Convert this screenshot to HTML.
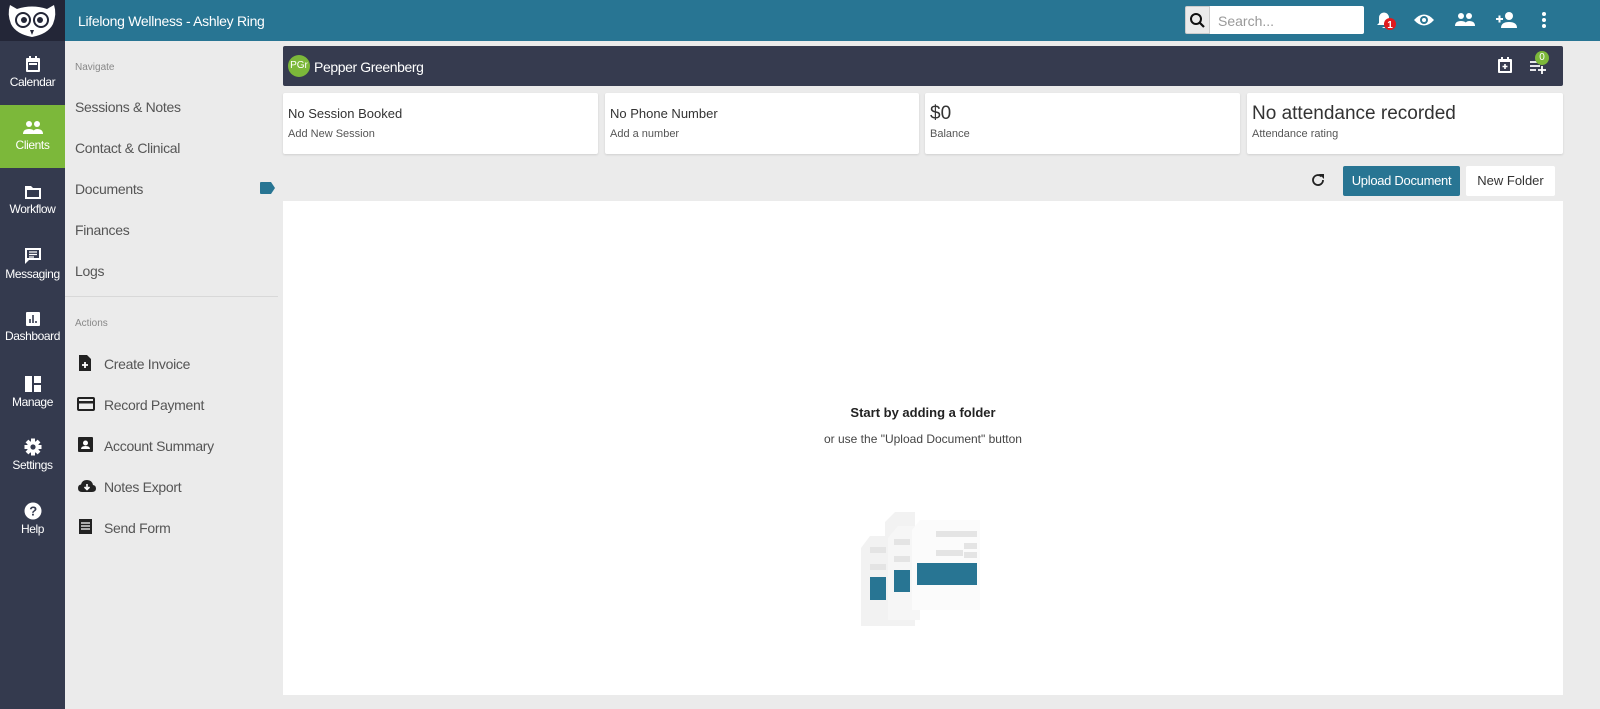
<!DOCTYPE html>
<html><head><meta charset="utf-8"><style>
*{box-sizing:border-box;margin:0;padding:0}
body{width:1600px;height:709px;overflow:hidden;background:#ebebeb;font-family:"Liberation Sans",sans-serif;position:relative}
.top{position:absolute;left:0;top:0;width:1600px;height:41px;background:#287593}
.logo{position:absolute;left:0;top:0;width:65px;height:41px;background:#232637}
.side{position:absolute;left:0;top:41px;width:65px;height:668px;background:#343a4e}
.si{position:absolute;left:0;width:65px;text-align:center;color:#fff;font-size:12px;letter-spacing:-.4px}
.si svg{display:block;margin:0 auto 2px}
.nav{position:absolute;left:65px;top:41px;width:215px;height:668px;background:#ebebeb}
.nl{position:absolute;left:10px;font-size:14px;color:#555;letter-spacing:-.3px}
.hd{position:absolute;left:10px;font-size:10px;color:#888}
.ai{position:absolute;left:12px;font-size:14px;color:#555;letter-spacing:-.3px}
.ai svg{position:absolute;left:0;top:-2px}
.ai span{position:absolute;left:27px;white-space:nowrap}
.card{position:absolute;top:93px;height:61px;background:#fff;border-radius:2px;box-shadow:0 1px 2px rgba(0,0,0,.12)}
.card .a{position:absolute;left:5px;top:13px;font-size:13px;color:#333}
.card .b{position:absolute;left:5px;top:35px;font-size:11px;color:#555}
</style></head><body>
<div class="top">
<div class="logo"><svg width="65" height="41" viewBox="0 0 65 41"><path d="M10 5 L17 9 Q32 4 47 9 L54 5 Q57 14 53 24 Q48 34 32 37 Q16 34 11 24 Q7 14 10 5Z" fill="#fff"/><circle cx="23" cy="20" r="8" fill="#232637"/><circle cx="41" cy="20" r="8" fill="#232637"/><circle cx="23" cy="20" r="6" fill="#fff"/><circle cx="41" cy="20" r="6" fill="#fff"/><circle cx="24" cy="20" r="3" fill="#232637"/><circle cx="40" cy="20" r="3" fill="#232637"/><path d="M30 30 L32 35 L34 30Z" fill="#232637"/></svg></div>
<div style="position:absolute;left:78px;top:13px;color:#fff;font-size:14px;letter-spacing:-.3px">Lifelong Wellness - Ashley Ring</div>
<div style="position:absolute;left:1185px;top:6px;width:25px;height:28px;background:#ebebeb;border:1px solid #ccc;border-radius:2px 0 0 2px"><svg width="23" height="26" viewBox="0 0 23 26"><circle cx="10" cy="12" r="5" fill="none" stroke="#111" stroke-width="2"/><path d="M14 16l4 4" stroke="#111" stroke-width="2.2"/></svg></div>
<div style="position:absolute;left:1210px;top:6px;width:154px;height:28px;background:#fff;border-radius:0 2px 2px 0;color:#999;font-size:14px;padding:7px 8px">Search...</div>
<svg style="position:absolute;left:1374px;top:10px" width="26" height="22" viewBox="0 0 26 22"><path d="M3 15 L5 13 V8 Q5 3 10 2.5 Q15 3 15 8 V13 L17 15Z M8 17 Q10 19 12 17Z" fill="#fff"/><circle cx="16" cy="14" r="6" fill="#e0191d"/><text x="16" y="18" font-size="10" font-weight="bold" fill="#fff" text-anchor="middle" font-family="Liberation Sans">1</text></svg>
<svg style="position:absolute;left:1413px;top:12px" width="22" height="16" viewBox="0 0 22 16"><path d="M1 8 Q11 -3 21 8 Q11 19 1 8Z" fill="#fff"/><circle cx="11" cy="8" r="4" fill="#287593"/><circle cx="11" cy="8" r="2" fill="#fff"/></svg>
<svg style="position:absolute;left:1454px;top:12px" width="22" height="16" viewBox="0 0 22 16"><circle cx="7" cy="4" r="3" fill="#fff"/><circle cx="15" cy="4" r="3" fill="#fff"/><path d="M1 14 Q1 9 7 9 Q13 9 13 14Z M11 14 Q11 9 15 9 Q21 9 21 14Z" fill="#fff"/></svg>
<svg style="position:absolute;left:1494px;top:11px" width="24" height="18" viewBox="0 0 24 18"><path d="M2 8h7M5.5 4.5v7" stroke="#fff" stroke-width="2"/><circle cx="15" cy="5" r="4" fill="#fff"/><path d="M7 17 Q7 11 15 11 Q23 11 23 17Z" fill="#fff"/></svg>
<svg style="position:absolute;left:1540px;top:11px" width="8" height="20"><circle cx="4" cy="3" r="2" fill="#fff"/><circle cx="4" cy="9" r="2" fill="#fff"/><circle cx="4" cy="15" r="2" fill="#fff"/></svg>
</div>
<div class="side">
<div class="si" style="top:14px"><svg width="16" height="18" viewBox="0 0 16 18"><rect x="1" y="3" width="14" height="14" rx="1" fill="#fff"/><rect x="3" y="7" width="10" height="8" fill="#343a4e"/><rect x="4" y="1" width="2" height="3" fill="#fff"/><rect x="10" y="1" width="2" height="3" fill="#fff"/><rect x="4" y="8" width="8" height="2" fill="#fff"/></svg>Calendar</div>
<div class="si" style="top:64px;height:63px;background:#7cb83a;padding-top:15px"><svg width="22" height="16" viewBox="0 0 22 16"><circle cx="7" cy="4" r="3" fill="#fff"/><circle cx="15" cy="4" r="3" fill="#fff"/><path d="M1 14 Q1 9 7 9 Q13 9 13 14Z M11 14 Q11 9 15 9 Q21 9 21 14Z" fill="#fff"/></svg>Clients</div>
<div class="si" style="top:143px"><svg width="18" height="16" viewBox="0 0 18 16"><path d="M1 2h6l2 2h8v11H1Z" fill="#fff"/><rect x="3" y="6" width="12" height="7" fill="#343a4e"/></svg>Workflow</div>
<div class="si" style="top:206px"><svg width="18" height="18" viewBox="0 0 18 18"><path d="M1 1h16v12H5l-4 4Z" fill="#fff"/><rect x="3" y="3" width="12" height="8" fill="#343a4e"/><path d="M5 5h8M5 7.5h8M5 10h5" stroke="#fff" stroke-width="1.2"/></svg>Messaging</div>
<div class="si" style="top:270px"><svg width="16" height="16" viewBox="0 0 16 16"><rect x="1" y="1" width="14" height="14" rx="1" fill="#fff"/><path d="M5 12V8M8 12V4M11 12v-2" stroke="#343a4e" stroke-width="1.6"/></svg>Dashboard</div>
<div class="si" style="top:334px"><svg width="18" height="18" viewBox="0 0 18 18"><rect x="1" y="1" width="7" height="16" fill="#fff"/><rect x="10" y="1" width="7" height="7" fill="#fff"/><rect x="10" y="10" width="7" height="7" fill="#fff"/></svg>Manage</div>
<div class="si" style="top:397px"><svg width="18" height="18" viewBox="0 0 18 18"><g fill="#fff"><circle cx="9" cy="9" r="6"/><rect x="7" y="0.5" width="4" height="17"/><rect x="0.5" y="7" width="17" height="4"/><rect x="7" y="0.5" width="4" height="17" transform="rotate(45 9 9)"/><rect x="7" y="0.5" width="4" height="17" transform="rotate(-45 9 9)"/></g><circle cx="9" cy="9" r="2.6" fill="#343a4e"/></svg>Settings</div>
<div class="si" style="top:461px"><svg width="18" height="18" viewBox="0 0 18 18"><circle cx="9" cy="9" r="8.5" fill="#fff"/><text x="9" y="13.5" font-size="13" font-weight="bold" fill="#343a4e" text-anchor="middle" font-family="Liberation Sans">?</text></svg>Help</div>
</div>
<div class="nav">
<div class="hd" style="top:21px">Navigate</div>
<div class="nl" style="top:58px">Sessions &amp; Notes</div>
<div class="nl" style="top:99px">Contact &amp; Clinical</div>
<div class="nl" style="top:140px">Documents</div>
<svg style="position:absolute;left:195px;top:141px" width="16" height="12"><path d="M0 1Q0 0 1 0H11L15 6L11 12H1Q0 12 0 11Z" fill="#287593"/></svg>
<div class="nl" style="top:181px">Finances</div>
<div class="nl" style="top:222px">Logs</div>
<div style="position:absolute;left:0;top:255px;width:213px;height:1px;background:#d8d8d8"></div>
<div class="hd" style="top:277px">Actions</div>
<div class="ai" style="top:315px"><svg width="16" height="18" viewBox="0 0 16 18"><path d="M2 1h8l4 4v12H2Z" fill="#222"/><path d="M8 8v6M5 11h6" stroke="#fff" stroke-width="1.8"/></svg><span>Create Invoice</span></div>
<div class="ai" style="top:356px"><svg width="18" height="18" viewBox="0 0 18 18"><rect x="1" y="3" width="16" height="12" rx="1" fill="none" stroke="#222" stroke-width="2"/><rect x="1" y="6" width="16" height="2.5" fill="#222"/></svg><span>Record Payment</span></div>
<div class="ai" style="top:397px"><svg width="18" height="18" viewBox="0 0 18 18"><rect x="1" y="1" width="15" height="15" rx="1" fill="#222"/><circle cx="8.5" cy="7" r="2.5" fill="#fff"/><path d="M4 13Q4 10 8.5 10Q13 10 13 13Z" fill="#fff"/></svg><span>Account Summary</span></div>
<div class="ai" style="top:438px"><svg width="20" height="18" viewBox="0 0 20 18"><path d="M5 15Q1 15 1 11Q1 8 4 7.5Q5 3 10 3Q15 3 16 8Q19 8.5 19 11.5Q19 15 15 15Z" fill="#222"/><path d="M10 7v5M7.5 10l2.5 2.5L12.5 10" stroke="#fff" stroke-width="1.6" fill="none"/></svg><span>Notes Export</span></div>
<div class="ai" style="top:479px"><svg width="18" height="18" viewBox="0 0 18 18"><rect x="2" y="1" width="13" height="15" fill="#222"/><path d="M4 5h9M4 8h9M4 11h9" stroke="#fff" stroke-width="1.3"/></svg><span>Send Form</span></div>
</div>
<div style="position:absolute;left:283px;top:46px;width:1280px;height:40px;background:#363b4f;border-radius:2px">
<div style="position:absolute;left:5px;top:9px;width:22px;height:22px;border-radius:50%;background:#7cb83a;color:#fff;font-size:10px;line-height:22px;text-align:center">PGr</div>
<div style="position:absolute;left:31px;top:13px;color:#fff;font-size:14px;letter-spacing:-.4px">Pepper Greenberg</div>
<svg style="position:absolute;left:1214px;top:10px" width="16" height="18" viewBox="0 0 16 18"><rect x="1" y="3" width="14" height="14" rx="1" fill="#fff"/><rect x="3" y="6" width="10" height="9" fill="#363b4f"/><rect x="4" y="1" width="2" height="3" fill="#fff"/><rect x="10" y="1" width="2" height="3" fill="#fff"/><path d="M8 8v5M5.5 10.5h5" stroke="#fff" stroke-width="1.6"/></svg>
<svg style="position:absolute;left:1246px;top:14px" width="18" height="14" viewBox="0 0 18 14"><path d="M1 2h10M1 6h10M1 10h6M13 6v8M9 10h8" stroke="#fff" stroke-width="1.8"/></svg>
<div style="position:absolute;left:1252px;top:5px;width:14px;height:14px;border-radius:50%;background:#7cb83a;color:#fff;font-size:10px;line-height:14px;text-align:center">0</div>
</div>
<div class="card" style="left:283px;width:315px"><div class="a">No Session Booked</div><div class="b">Add New Session</div></div>
<div class="card" style="left:605px;width:314px"><div class="a">No Phone Number</div><div class="b">Add a number</div></div>
<div class="card" style="left:925px;width:315px"><div class="a" style="font-size:19px;top:10px">$0</div><div class="b">Balance</div></div>
<div class="card" style="left:1247px;width:316px"><div class="a" style="font-size:19px;top:10px">No attendance recorded</div><div class="b">Attendance rating</div></div>
<svg style="position:absolute;left:1310px;top:172px" width="16" height="16" viewBox="0 0 16 16"><path d="M13 8A5 5 0 1 1 11.5 4.5" fill="none" stroke="#222" stroke-width="1.8"/><path d="M9 2h5v5Z" fill="#222"/></svg>
<div style="position:absolute;left:1343px;top:166px;width:117px;height:30px;background:#287593;border-radius:2px;color:#fff;font-size:13px;text-align:center;line-height:30px;letter-spacing:-.3px">Upload Document</div>
<div style="position:absolute;left:1466px;top:166px;width:89px;height:30px;background:#fff;border-radius:2px;color:#333;font-size:13px;text-align:center;line-height:30px">New Folder</div>
<div style="position:absolute;left:283px;top:201px;width:1280px;height:494px;background:#fff">
<div style="position:absolute;left:0;width:1280px;top:204px;text-align:center;font-size:13px;font-weight:bold;color:#222">Start by adding a folder</div>
<div style="position:absolute;left:0;width:1280px;top:231px;text-align:center;font-size:12px;color:#444">or use the "Upload Document" button</div>
<svg style="position:absolute;left:0;top:0" width="1280" height="494" viewBox="283 201 1280 494">
<path d="M861 548 L870 536 L885 536 L885 522 L895 512 L915 512 L915 626 L861 626Z" fill="#f2f2f2"/>
<path d="M888 538 L898 526 L920 526 L920 620 L888 620Z" fill="#f6f6f6"/>
<path d="M912 530 L920 520 L980 520 L980 610 L912 610Z" fill="#fbfbfb"/>
<g fill="#e4e4e4">
<rect x="870" y="547" width="16" height="6"/><rect x="870" y="564" width="16" height="6"/>
<rect x="894" y="539" width="16" height="6"/><rect x="894" y="556" width="16" height="6"/>
<rect x="936" y="531" width="37" height="6"/><rect x="936" y="550" width="27" height="6"/>
<rect x="964" y="531" width="13" height="6"/><rect x="964" y="543" width="13" height="6"/><rect x="964" y="552" width="13" height="6"/>
</g>
<g fill="#287593">
<rect x="870" y="577" width="16" height="23"/><rect x="894" y="570" width="16" height="22"/><rect x="917" y="563" width="60" height="22"/>
</g>
</svg>
</div>
</body></html>
